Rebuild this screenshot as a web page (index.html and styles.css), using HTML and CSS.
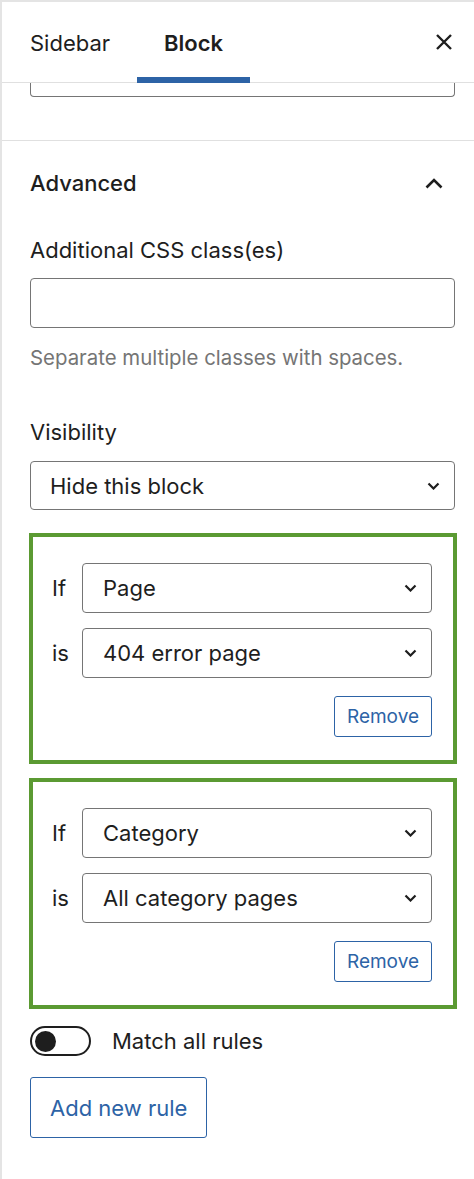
FILE: index.html
```html
<!DOCTYPE html>
<html lang="en">
<head>
<meta charset="utf-8">
<title>Block settings</title>
<link rel="stylesheet" href="styles.css">
</head>
<body>
<div class="panel">
  <header class="tabs">
    <button class="tab">Sidebar</button>
    <button class="tab active">Block</button>
    <button class="close" aria-label="Close">
      <svg width="18" height="18" viewBox="0 0 18 18"><path d="M2 2L16 16M16 2L2 16" stroke="#1e1e1e" stroke-width="2.4" fill="none"/></svg>
    </button>
  </header>

  <section class="prev">
    <div class="cut-input"></div>
  </section>

  <section class="advanced">
    <div class="adv-head">
      <h2>Advanced</h2>
      <svg class="chev-up" width="18" height="11" viewBox="0 0 18 11"><path d="M1.5 9.5L9 2l7.5 7.5" stroke="#1e1e1e" stroke-width="2.6" fill="none"/></svg>
    </div>

    <label class="label">Additional CSS class(es)</label>
    <div class="input"></div>
    <p class="help">Separate multiple classes with spaces.</p>

    <label class="label vis">Visibility</label>
    <div class="select wide">
      <span>Hide this block</span>
      <svg width="13" height="8" viewBox="0 0 13 8"><path d="M1.5 1.5l5 5 5-5" stroke="#1e1e1e" stroke-width="2.2" fill="none"/></svg>
    </div>

    <div class="rule">
      <div class="rule-row">
        <span class="cond">If</span>
        <div class="select"><span>Page</span><svg width="13" height="8" viewBox="0 0 13 8"><path d="M1.5 1.5l5 5 5-5" stroke="#1e1e1e" stroke-width="2.2" fill="none"/></svg></div>
      </div>
      <div class="rule-row">
        <span class="cond">is</span>
        <div class="select"><span>404 error page</span><svg width="13" height="8" viewBox="0 0 13 8"><path d="M1.5 1.5l5 5 5-5" stroke="#1e1e1e" stroke-width="2.2" fill="none"/></svg></div>
      </div>
      <button class="remove">Remove</button>
    </div>

    <div class="rule">
      <div class="rule-row">
        <span class="cond">If</span>
        <div class="select"><span>Category</span><svg width="13" height="8" viewBox="0 0 13 8"><path d="M1.5 1.5l5 5 5-5" stroke="#1e1e1e" stroke-width="2.2" fill="none"/></svg></div>
      </div>
      <div class="rule-row">
        <span class="cond">is</span>
        <div class="select"><span>All category pages</span><svg width="13" height="8" viewBox="0 0 13 8"><path d="M1.5 1.5l5 5 5-5" stroke="#1e1e1e" stroke-width="2.2" fill="none"/></svg></div>
      </div>
      <button class="remove">Remove</button>
    </div>

    <div class="toggle-row">
      <span class="toggle"><span class="knob"></span></span>
      <span class="toggle-label">Match all rules</span>
    </div>

    <button class="add">Add new rule</button>
  </section>
</div>
</body>
</html>
```

FILE: styles.css
```css
* { box-sizing: border-box; }

body {
  margin: 0;
  background: #fff;
  font-family: Inter, "Liberation Sans", sans-serif;
  font-size: 22px;
  color: #1e1e1e;
}

.panel {
  border-left: 2px solid #e4e4e4;
  border-top: 2px solid #e4e4e4;
  min-height: 1179px;
}

.tabs {
  display: flex;
  align-items: stretch;
  height: 81px;
  border-bottom: 1px solid #e0e0e0;
}

.tab {
  background: none;
  border: 0;
  padding: 0 27px;
  height: 81px;
  margin-bottom: -1px;
  font-family: inherit;
  font-size: 22px;
  color: #1e1e1e;
}

.tab:first-child { padding-left: 28px; }

.tab.active {
  font-weight: 600;
  box-shadow: inset 0 -6px 0 #2d63a6;
}

.close {
  margin-left: auto;
  margin-right: 21px;
  background: none;
  border: 0;
  padding: 0;
  display: flex;
  align-items: center;
}

.prev {
  padding: 0 19px 43px 28px;
  border-bottom: 1px solid #e0e0e0;
}

.cut-input {
  height: 14px;
  border: 1.5px solid #757575;
  border-top: 0;
  border-radius: 0 0 4px 4px;
}

.advanced {
  padding: 0 19px 0 28px;
  display: flex;
  flex-direction: column;
}

.adv-head {
  height: 84px;
  display: flex;
  align-items: center;
  justify-content: space-between;
}

.adv-head h2 {
  margin: 0;
  font-size: 22px;
  font-weight: 500;
}

.chev-up { margin-right: 12px; }

.label {
  display: block;
  line-height: 30px;
  margin-top: 10px;
}

.label.vis { margin-top: 45px; }

.input {
  margin-top: 13px;
  height: 50px;
  border: 1.5px solid #757575;
  border-radius: 4px;
}

.help {
  margin: 16px 0 0;
  font-size: 20.4px;
  line-height: 28px;
  color: #757575;
}

.select {
  height: 50px;
  display: flex;
  align-items: center;
  justify-content: space-between;
  padding: 0 14px 0 19px;
  border: 1.5px solid #757575;
  border-radius: 4px;
  background: #fff;
}

.select.wide {
  margin-top: 14px;
  height: 49px;
}

.rule {
  margin: 23px -2px 0 -1px;
  border: 4.5px solid #5b9a32;
  padding: 26px 21px 23px 19px;
  display: flex;
  flex-direction: column;
}

.rule + .rule { margin-top: 14px; }

.rule-row {
  display: flex;
  align-items: center;
}

.rule-row + .rule-row { margin-top: 15px; }

.cond {
  width: 30px;
  flex: none;
}

.rule .select {
  flex: 1;
  padding-left: 20px;
}

.remove {
  align-self: flex-end;
  margin-top: 18px;
  height: 41px;
  width: 98px;
  border: 1.5px solid #2d63a6;
  border-radius: 3px;
  background: #fff;
  color: #2d63a6;
  font-family: inherit;
  font-size: 19px;
  padding: 0;
}

.toggle-row {
  margin-top: 17px;
  display: flex;
  align-items: center;
  gap: 21px;
}

.toggle {
  width: 61px;
  height: 30px;
  border: 2px solid #1e1e1e;
  border-radius: 15px;
  display: flex;
  align-items: center;
  padding-left: 3px;
}

.knob {
  width: 21px;
  height: 21px;
  border-radius: 50%;
  background: #1e1e1e;
}

.add {
  align-self: flex-start;
  margin-top: 21px;
  height: 61px;
  padding: 0 19px;
  border: 1.5px solid #2d63a6;
  border-radius: 3px;
  background: #fff;
  color: #2d63a6;
  font-family: inherit;
  font-size: 22px;
}
```
